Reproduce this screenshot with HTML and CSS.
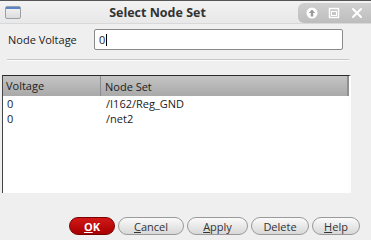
FILE: index.html
```html
<!DOCTYPE html>
<html>
<head>
<meta charset="utf-8">
<link rel="stylesheet" href="styles.css">
</head>
<body>
<div class="window">
  <div class="titlebar">
    <div class="winicon"><div class="winicon-bar"></div></div>
    <div class="title">Select Node Set</div>
    <div class="controls">
      <svg width="12" height="12" viewBox="0 0 12 12"><circle cx="6" cy="6" r="5.5" fill="#fff"/><path d="M6 2.5 L9.2 6 H7.2 V9.5 H4.8 V6 H2.8 Z" fill="#9a9a9a"/></svg>
      <svg width="12" height="12" viewBox="0 0 12 12"><rect x="1.5" y="1.5" width="9" height="9" fill="none" stroke="#fff" stroke-width="1.4"/><rect x="3.5" y="4.5" width="5" height="4" fill="none" stroke="#fff" stroke-width="1"/></svg>
      <svg width="12" height="12" viewBox="0 0 12 12"><path d="M2 2 L10 10 M10 2 L2 10" stroke="#fff" stroke-width="2" stroke-linecap="round"/></svg>
    </div>
  </div>
  <div class="content">
    <div class="field">
      <label class="label">Node Voltage</label>
      <div class="input">0<span class="caret"></span></div>
    </div>
    <div class="sep"></div>
    <div class="tablewrap">
      <div class="table">
        <div class="thead">
          <div class="c1 th">Voltage</div>
          <div class="c2 th">Node Set</div>
        </div>
        <div class="tr"><div class="c1">0</div><div class="c2">/I162/Reg_GND</div></div>
        <div class="tr"><div class="c1">0</div><div class="c2">/net2</div></div>
      </div>
    </div>
    <div class="buttons">
      <button class="btn ok"><u>O</u>K</button>
      <button class="btn"><u>C</u>ancel</button>
      <button class="btn"><u>A</u>pply</button>
      <button class="btn">Delete</button>
      <button class="btn"><u>H</u>elp</button>
    </div>
  </div>
</div>
</body>
</html>
```
FILE: styles.css
```css
html, body { margin: 0; padding: 0; }
body { width: 371px; height: 240px; overflow: hidden; background: #efefef; font-family: "Open Sans", "Noto Sans", sans-serif; font-size: 11px; color: #222; }
.window { width: 371px; height: 240px; display: flex; flex-direction: column; }
.titlebar { display: flex; align-items: center; background: linear-gradient(#f2f2f2, #e8e8e8); border-bottom: 1px solid #d8d8d8; border-top: 1px solid #555; box-sizing: border-box; height: 24px; }
.winicon { width: 16px; height: 13px; margin-left: 5px; border: 1px solid #9aa0a8; border-radius: 2px; background: linear-gradient(#f4f4f4, #dcdcdc); box-sizing: border-box; }
.winicon-bar { height: 2px; background: #5a86c8; }
.title { flex: 1; text-align: center; font-weight: bold; font-size: 12.5px; color: #333; padding-right: 4px; }
.controls { align-self: stretch; margin-top: 2px; width: 73px; display: flex; align-items: center; justify-content: space-around; padding: 0 3px; box-sizing: border-box; background: linear-gradient(#d0d0d0, #bdbdbd); border-top-left-radius: 6px; border-bottom-left-radius: 6px; }
.content { flex: 1; display: flex; flex-direction: column; }
.field { display: flex; align-items: center; margin-top: 5px; padding-left: 8px; }
.label { width: 86px; }
.input { width: 249px; height: 21px; box-sizing: border-box; border: 1px solid #8a8a8a; border-radius: 2px; background: #fff; padding: 2px 4px; display: flex; align-items: center; }
.caret { display: inline-block; width: 1px; height: 12px; background: #000; margin-left: 1px; }
.sep { margin: 9px 22px 0 7px; height: 1px; background: #c8c8c8; border-bottom: 1px solid #fbfbfb; }
.tablewrap { margin-top: 14px; display: flex; height: 118px; }
.table { margin-left: 2px; width: 346px; background: #fff; border-left: 1px solid #444; border-top: 1px solid #2a2a2a; border-right: 2px solid #fdfdfd; }
.thead { display: flex; height: 20px; background: linear-gradient(#c4c4c4, #a9a9a9); align-items: center; border-right: 2px solid #8f8f8f; }
.th { color: #222; }
.c1 { width: 98px; padding-left: 3px; box-sizing: border-box; }
.thead .c1 { border-right: 1px solid #8c8c8c; height: 20px; line-height: 20px; }
.c2 { padding-left: 4px; }
.tr { display: flex; height: 15px; line-height: 15px; }
.tr .c1 { padding-left: 4px; }
.tr .c2 { padding-left: 5px; }
.buttons { display: flex; justify-content: flex-end; gap: 3px; margin-top: 24px; padding-right: 11px; }
.btn { height: 18px; font-family: inherit; font-size: 11px; color: #333; border: 1px solid #9a9a9a; border-radius: 9px; background: linear-gradient(#fafafa, #d8d8d8); padding: 0; display: flex; align-items: center; justify-content: center; }
.btn:nth-child(2) { width: 66px; }
.btn:nth-child(3) { width: 61px; }
.btn:nth-child(4) { width: 58px; }
.btn:nth-child(5) { width: 48px; }
.ok { width: 46px; color: #fff; font-weight: bold; background: linear-gradient(#d21818, #a80000); border-color: #7a0000; }
```
